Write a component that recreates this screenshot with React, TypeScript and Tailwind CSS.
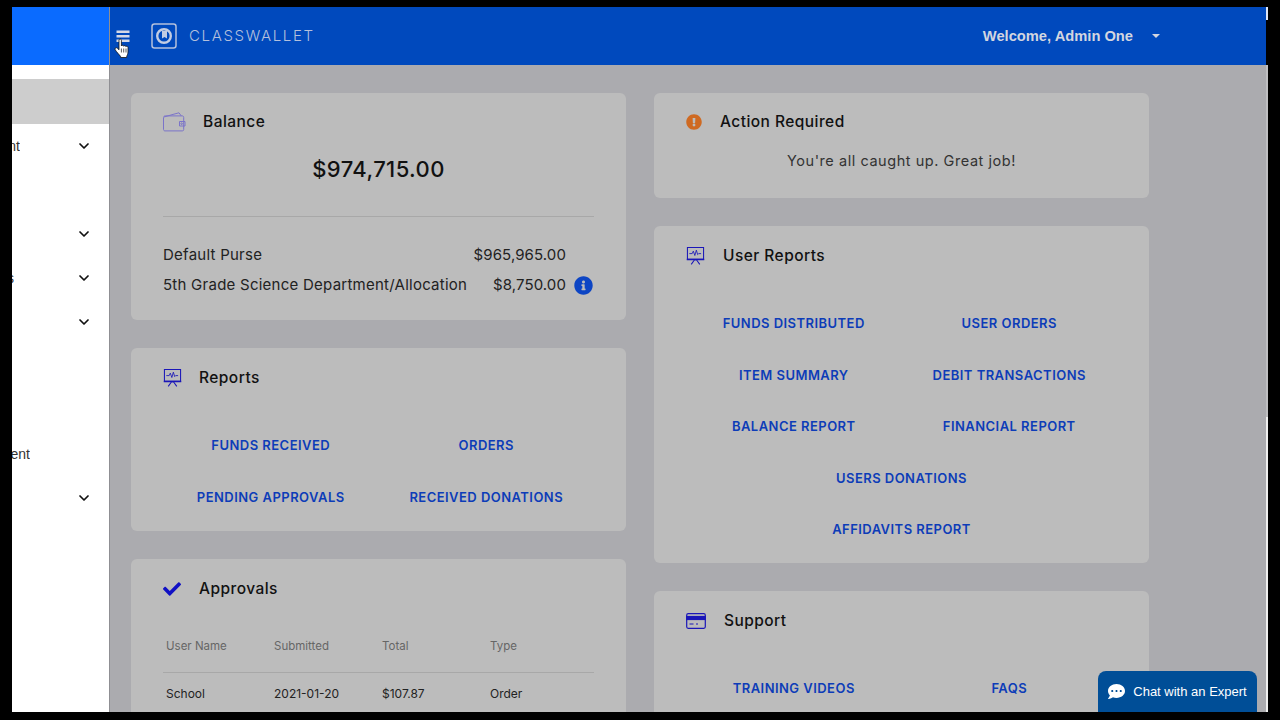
import React from 'react';
import { ChevronDown } from 'lucide-react';
import { FaCheck, FaCommentDots, FaExclamationCircle, FaInfoCircle } from 'react-icons/fa';

const SANS = 'font-["Liberation_Sans",Arial,sans-serif]';

const ReportsIcon = ({ className }: { className?: string }) => (
  <svg viewBox="0 0 20 20" className={className} fill="none" stroke="#1a16b8" strokeWidth="1.1">
    <path d="M1.5 1.5h17v12.5h-17z" />
    <path d="M0.8 14.2h18.4" strokeWidth="1.6" />
    <path d="M3.5 8h3l1.2-2.6 1.6 4.6 1.6-5.6 1.4 4.6 1-1h2.6" strokeWidth="0.9" />
    <path d="M9 14.500l-3.500 4.800M11 14.500l3.500 4.800M9 14.500h2" />
  </svg>
);

const WalletIcon = () => (
  <svg viewBox="0 0 24 20" className="w-[24px] h-[20px] -ml-[1px]" fill="none" stroke="#7b74c9" strokeWidth="1">
    <path d="M1.5 5.500c0-1 .8-1.600 1.800-1.600h17c1 0 1.400.7 1.400 1.500v12.200c0 .8-.5 1.300-1.300 1.300H3c-.9 0-1.500-.6-1.500-1.500z" />
    <path d="M2 5l9-2.600 6-1.600 2.200 3" />
    <path d="M17.500 9.500h5.500v4.500h-5.500z" />
    <circle cx="19.600" cy="11.700" r="0.8" />
  </svg>
);

const LogoIcon = () => (
  <svg viewBox="0 0 26 26" className="w-[26px] h-[26px]" fill="none">
    <rect x="1" y="1" width="24" height="24" rx="2.500" stroke="#b4c0dc" strokeWidth="1.500" />
    <circle cx="13" cy="13" r="6.800" stroke="#c3cde3" strokeWidth="2.400" />
    <path d="M11 8h5v7.500l-2.500-1.600-2.500 1.600z" fill="#c3cde3" />
  </svg>
);

const MenuIcon = () => (
  <svg viewBox="0 0 14 13" className="w-[14px] h-[13px]" fill="#d5d9e6">
    <rect x="0.500" y="0.500" width="13" height="2.500" />
    <rect x="0.500" y="5" width="13" height="2.500" />
    <rect x="0.500" y="9.500" width="13" height="2.500" />
  </svg>
);

// mouse pointer sitting over the menu button
const HandCursor = () => (
  <svg viewBox="0 0 16 20" className="absolute left-[114px] top-[38px] w-[16px] h-[20px]">
    <path
      d="M5 2.200c0-1.600 2.400-1.600 2.400 0V8c.4-1 2-1 2.300.2.500-.9 2-.7 2.200.4.600-.7 2.100-.4 2.100.9V14c0 2-.8 3-1.300 4.500v1H6.500v-1.200C5 16.500 3 14.500 1.200 11.800c-.8-1.300.8-2.800 2-1.800L5 11.800z"
      fill="#fff"
      stroke="#111"
      strokeWidth="0.8"
      strokeLinejoin="round"
    />
    <path d="M7.400 10.500v4M9.700 10.500v4M12 10.500v4" stroke="#111" strokeWidth="0.7" />
  </svg>
);

const CardLink = ({ label, className }: { label: string; className?: string }) => (
  <a href="#" className={`text-[#0d3cb8] text-[13px] font-semibold tracking-[0.46px] whitespace-nowrap ${className ?? ''}`}>
    {label}
  </a>
);

const Card = ({ className, children }: { className?: string; children: React.ReactNode }) => (
  <section className={`bg-[#bcbcbc] rounded-[6px] shrink-0 ${className ?? ''}`}>{children}</section>
);

const CardTitle = ({ icon, title, gap }: { icon: React.ReactNode; title: string; gap: string }) => (
  <div className={`flex items-center ${gap}`}>
    {icon}
    <h2 className="text-[15.5px] font-medium text-[#111] tracking-[0.45px]">{title}</h2>
  </div>
);

const SideRow = ({ label, clip, chevron = true }: { label?: string; clip?: string; chevron?: boolean }) => (
  <div className="flex items-center justify-between h-[44px] pr-[17px]">
    <div className={`${clip ?? 'w-0'} overflow-hidden flex justify-end text-[#333] text-[14px] ${SANS}`}>
      <span className="whitespace-nowrap">{label}</span>
    </div>
    {chevron && <ChevronDown className="w-[16px] h-[16px] text-[#111]" strokeWidth={2.6} />}
  </div>
);

const Sidebar = () => (
  <aside className="w-[97px] shrink-0 flex flex-col bg-white">
    <div className="h-[58px] bg-[#0a6bff]" />
    <div className="h-[14px]" />
    <div className="h-[45px] bg-[#cdcdcd]" />
    <SideRow label="nt" clip="w-[8px]" />
    <SideRow chevron={false} />
    <SideRow />
    <SideRow label="s" clip="w-[2px]" />
    <SideRow />
    <SideRow chevron={false} />
    <SideRow chevron={false} />
    <SideRow label="ent" clip="w-[18px]" chevron={false} />
    <SideRow />
  </aside>
);

const Header = () => (
  <header className="h-[58px] shrink-0 bg-[#0049bd] flex items-center">
    <div className="ml-[6px] w-[14px] flex">
      <MenuIcon />
    </div>
    <div className="ml-[21px] flex items-center gap-[12px]">
      <LogoIcon />
      <span className="text-[#b4c0dc] text-[15px] font-light tracking-[1.65px]">CLASSWALLET</span>
    </div>
    <div className={`ml-auto mr-[106px] flex items-center gap-[19px] text-[#d3d6e0] text-[14.700px] font-bold ${SANS}`}>
      <span>Welcome, Admin One</span>
      <span className="w-0 h-0 border-x-[4px] border-x-transparent border-t-[4px] border-t-[#d3d6e0]" />
    </div>
  </header>
);

const BalanceCard = () => (
  <Card className="h-[227px] px-[32px] pt-[17px]">
    <CardTitle icon={<WalletIcon />} title="Balance" gap="gap-[17px]" />
    <p className="mt-[20px] text-center text-[22px] font-medium text-[#111] tracking-[0.4px]">$974,715.00</p>
    <div className="mt-[30px] border-t border-[#a8a8a8]" />
    <div className="mt-[27px] flex items-center justify-between pr-[28px] text-[15px] tracking-[0.25px] text-[#222]">
      <span>Default Purse</span>
      <span className="tracking-[0.1px]">$965,965.00</span>
    </div>
    <div className="mt-[7px] flex items-center justify-between pr-[1px] text-[15px] tracking-[0.25px] text-[#222]">
      <span>5th Grade Science Department/Allocation</span>
      <span className="flex items-center gap-[8px] tracking-[0.1px]">
        $8,750.00
        <FaInfoCircle className="w-[19px] h-[19px] text-[#0d45c4]" />
      </span>
    </div>
  </Card>
);

const ReportsCard = () => (
  <Card className="h-[183px] pt-[18px] px-[32px]">
    <CardTitle icon={<ReportsIcon className="w-[19px] h-[19px]" />} title="Reports" gap="gap-[17px]" />
    <div className="mt-[31px] grid grid-cols-2 auto-rows-[51.500px] items-center justify-items-center">
      <CardLink label="FUNDS RECEIVED" />
      <CardLink label="ORDERS" />
      <CardLink label="PENDING APPROVALS" />
      <CardLink label="RECEIVED DONATIONS" />
    </div>
  </Card>
);

const ApprovalsCard = () => (
  <Card className="h-[200px] pt-[18px] px-[32px]">
    <CardTitle icon={<FaCheck className="w-[18px] h-[18px] text-[#1010c4]" />} title="Approvals" gap="gap-[18px]" />
    <div className="mt-[38px] flex text-[11.500px] text-[#666] pb-[16px] border-b border-[#a8a8a8] px-[3px]">
      <span className="w-[108px]">User Name</span>
      <span className="w-[108px]">Submitted</span>
      <span className="w-[108px]">Total</span>
      <span>Type</span>
    </div>
    <div className="mt-[12px] flex text-[12px] text-[#222] px-[3px]">
      <span className="w-[108px]">School</span>
      <span className="w-[108px]">2021-01-20</span>
      <span className="w-[108px]">$107.87</span>
      <span>Order</span>
    </div>
  </Card>
);

const ActionCard = () => (
  <Card className="h-[105px] px-[32px] pt-[17px]">
    <CardTitle
      icon={<FaExclamationCircle className="w-[16px] h-[16px] text-[#cf6a22]" />}
      title="Action Required"
      gap="gap-[18px]"
    />
    <p className="mt-[17px] text-center text-[14.500px] text-[#333] tracking-[0.55px]">You're all caught up. Great job!</p>
  </Card>
);

const UserReportsCard = () => (
  <Card className="h-[337px] pt-[18px] px-[32px]">
    <CardTitle icon={<ReportsIcon className="w-[19px] h-[19px]" />} title="User Reports" gap="gap-[18px]" />
    <div className="mt-[31px] grid grid-cols-2 auto-rows-[51.500px] items-center justify-items-center">
      <CardLink label="FUNDS DISTRIBUTED" />
      <CardLink label="USER ORDERS" />
      <CardLink label="ITEM SUMMARY" />
      <CardLink label="DEBIT TRANSACTIONS" />
      <CardLink label="BALANCE REPORT" />
      <CardLink label="FINANCIAL REPORT" />
      <CardLink label="USERS DONATIONS" className="col-span-2" />
      <CardLink label="AFFIDAVITS REPORT" className="col-span-2" />
    </div>
  </Card>
);

const SupportCard = () => (
  <Card className="h-[200px] pt-[18px] px-[32px]">
    <CardTitle
      icon={
        <svg viewBox="0 0 20 16" className="w-[20px] h-[16px]" fill="none" stroke="#1a16b8" strokeWidth="1.200">
          <rect x="0.700" y="0.700" width="18.600" height="14.600" rx="1.500" />
          <rect x="0.700" y="3.500" width="18.600" height="3" fill="#1a16b8" />
          <path d="M3.500 11h4M10 11h2" />
        </svg>
      }
      title="Support"
      gap="gap-[18px]"
    />
    <div className="mt-[31px] grid grid-cols-2 auto-rows-[51.500px] items-center justify-items-center">
      <CardLink label="TRAINING VIDEOS" />
      <CardLink label="FAQS" />
    </div>
  </Card>
);

export default function App() {
  return (
    <div className="relative w-[1280px] h-[720px] bg-black pt-[7px] pb-[8px] pl-[12px] pr-[12px] overflow-hidden font-['Inter',sans-serif]">
      <div className="flex h-full overflow-hidden">
        <Sidebar />
        <div className="flex-1 min-w-0 flex flex-col bg-[#ababaf] border-l border-[#8f8f93]">
          <Header />
          <div className="flex-1 min-h-0 overflow-hidden flex items-start gap-[28px] pt-[28px] pl-[21px]">
            <div className="w-[495px] shrink-0 flex flex-col gap-[28px]">
              <BalanceCard />
              <ReportsCard />
              <ApprovalsCard />
            </div>
            <div className="w-[495px] shrink-0 flex flex-col gap-[28px]">
              <ActionCard />
              <UserReportsCard />
              <SupportCard />
            </div>
          </div>
        </div>
        {/* scrollbar sliver at the right edge */}
        <div className="w-[2px] shrink-0 flex flex-col">
          <div className="h-[13px] bg-[#dfe6f5]" />
          <div className="h-[45px] bg-black" />
          <div className="h-[352px] bg-[#bebec0]" />
          <div className="flex-1 bg-[#eeeeee]" />
        </div>
      </div>
      <HandCursor />
      <button className={`absolute left-[1098px] top-[671px] w-[159px] h-[41px] rounded-t-[8px] bg-[#004e97] flex items-center justify-center gap-[8px] text-white text-[13px] ${SANS}`}>
        <FaCommentDots className="w-[17px] h-[17px]" />
        Chat with an Expert
      </button>
    </div>
  );
}
